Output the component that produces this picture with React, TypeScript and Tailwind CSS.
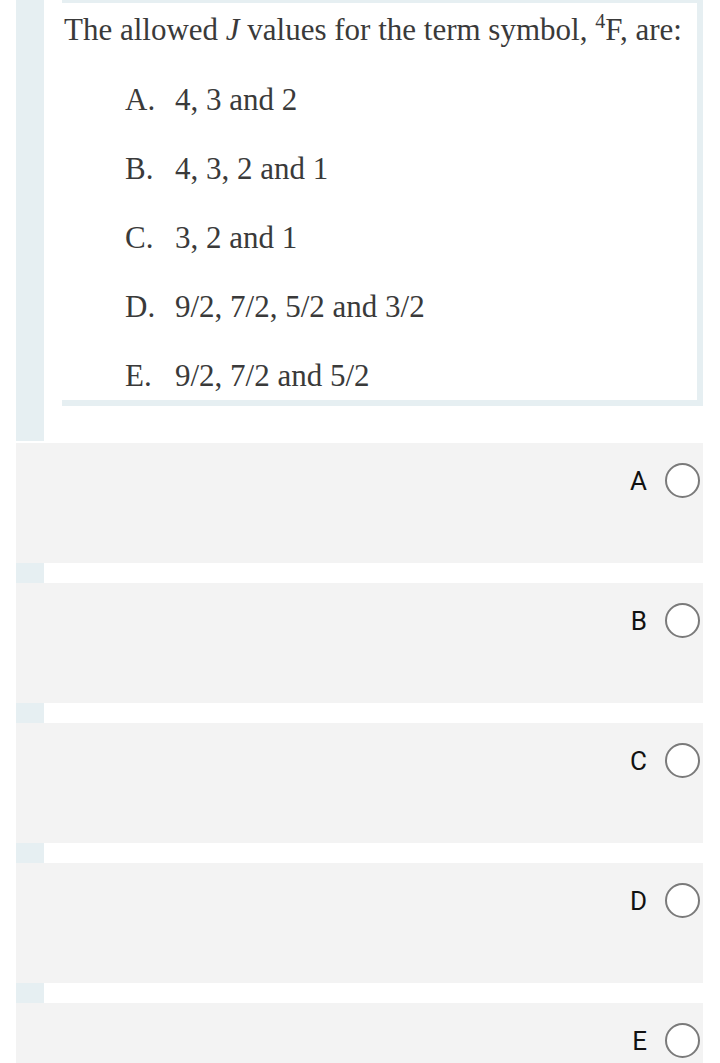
import React from 'react';

const OPTIONS = [
  { key: 'A', text: '4, 3 and 2' },
  { key: 'B', text: '4, 3, 2 and 1' },
  { key: 'C', text: '3, 2 and 1' },
  { key: 'D', text: '9/2, 7/2, 5/2 and 3/2' },
  { key: 'E', text: '9/2, 7/2 and 5/2' },
];

const serif = { fontFamily: '"Liberation Serif", "Times New Roman", serif' };

function AnswerRow({ letter, last }: { letter: string; last: boolean }) {
  return (
    <>
      <div className="h-[120px] bg-[#f3f3f3] flex justify-end items-start pt-[20px] pr-[3px]">
        <label className="flex items-center gap-[18px] cursor-pointer">
          <span className="text-[26px] leading-none text-[#111]" style={{ fontFamily: 'Roboto, "Noto Sans", sans-serif' }}>
            {letter}
          </span>
          <span className="w-[35px] h-[35px] rounded-full border-2 border-[#7a7a7a] bg-white" />
        </label>
      </div>
      {!last && (
        <div className="h-[20px] flex">
          <div className="w-[28px] bg-[#e6eff2]" />
        </div>
      )}
    </>
  );
}

export default function App() {
  return (
    <div className="w-[720px] h-[1063px] bg-white overflow-hidden">
      <div className="ml-[16px] w-[687px]">
        {/* Question */}
        <div className="flex items-start">
          <div className="w-[28px] h-[441px] bg-[#e6eff2]" />
          <div className="w-[18px]" />
          <div className="flex-1 bg-[#e6eff2] pt-[3px] pr-[6px] pb-[6px]">
            <div className="bg-white h-[397px] pt-[10px] pl-[2px] text-[31px] leading-[34px] text-[#3a3a3a]" style={serif}>
              <p className="whitespace-nowrap">
                The allowed <i>J</i> values for the term symbol, <sup className="text-[20px] top-[-0.6em]">4</sup>F, are:
              </p>
              <ul className="mt-[36px] pl-[61px]">
                {OPTIONS.map((o) => (
                  <li key={o.key} className="flex h-[69px]">
                    <span className="w-[50px]">{o.key}.</span>
                    <span>{o.text}</span>
                  </li>
                ))}
              </ul>
            </div>
          </div>
        </div>

        {/* Answers */}
        <div className="mt-[2px]">
          {OPTIONS.map((o, i) => (
            <AnswerRow key={o.key} letter={o.key} last={i === OPTIONS.length - 1} />
          ))}
        </div>
      </div>
    </div>
  );
}
